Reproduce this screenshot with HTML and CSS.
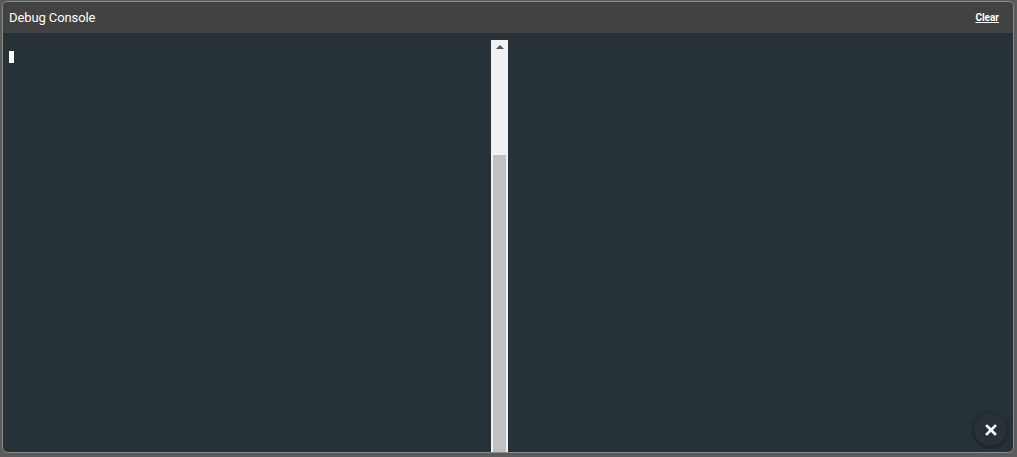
FILE: index.html
```html
<!DOCTYPE html>
<html lang="en">
<head>
  <meta charset="UTF-8" />
  <meta name="viewport" content="width=device-width, initial-scale=1.0"/>
  <title>Debug Console</title>
  <link rel="stylesheet" href="styles.css">
</head>
<body>

  <div class="console">
    <div class="console-header">
      <span class="title">Debug Console</span>
      <a class="clear" href="#">Clear</a>
    </div>
    <div class="console-body">
      <div class="output">
        <div class="log">
          <span class="caret"></span>
        </div>
        <div class="scrollbar">
          <div class="arrow"></div>
          <div class="track"></div>
          <div class="thumb"></div>
        </div>
      </div>
      <button class="close" title="Close">
        <svg width="12" height="12" viewBox="0 0 12 12">
          <path d="M2 2 L10 10 M10 2 L2 10" stroke="#fff" stroke-width="2.6" stroke-linecap="square"/>
        </svg>
      </button>
    </div>
  </div>

</body>
</html>
```

FILE: styles.css
```css
* {
  margin: 0;
  padding: 0;
  box-sizing: border-box;
}

html, body {
  height: 100%;
}

body {
  font-family: Roboto, 'Liberation Sans', sans-serif;
  background: #5b5b5b;
  padding: 1px 3px 4px 2px;
  overflow: hidden;
}

.console {
  height: 100%;
  display: flex;
  flex-direction: column;
  border: 1px solid #8c8c8c;
  border-radius: 6px;
  overflow: hidden;
  background: #263238;
}

.console-header {
  height: 31px;
  flex: none;
  background: #424242;
  display: flex;
  align-items: center;
  justify-content: space-between;
  padding: 0 14px 0 6px;
  color: #fff;
}

.title {
  font-size: 13px;
  letter-spacing: -0.1px;
}

.clear {
  color: #fff;
  font-size: 10px;
  font-weight: bold;
  text-decoration: underline;
}

.console-body {
  flex: 1;
  position: relative;
  padding-top: 7px;
  display: flex;
}

.output {
  width: 505px;
  display: flex;
}

.log {
  flex: 1;
  padding: 11px 0 0 6px;
}

.caret {
  display: block;
  width: 5px;
  height: 12px;
  background: #fff;
}

.scrollbar {
  width: 17px;
  background: #f1f1f1;
  display: flex;
  flex-direction: column;
  align-items: center;
}

.arrow {
  margin-top: 5px;
  width: 0;
  height: 0;
  border-left: 4px solid transparent;
  border-right: 4px solid transparent;
  border-bottom: 4px solid #505050;
}

.track {
  height: 106px;
}

.thumb {
  flex: 1;
  width: 13px;
  background: #c1c1c1;
}

.close {
  position: absolute;
  right: 6px;
  bottom: 6px;
  width: 33px;
  height: 33px;
  border-radius: 50%;
  border: none;
  background: #263238;
  box-shadow: 0 1px 4px rgba(0, 0, 0, 0.5);
  display: flex;
  align-items: center;
  justify-content: center;
  cursor: pointer;
}
```
